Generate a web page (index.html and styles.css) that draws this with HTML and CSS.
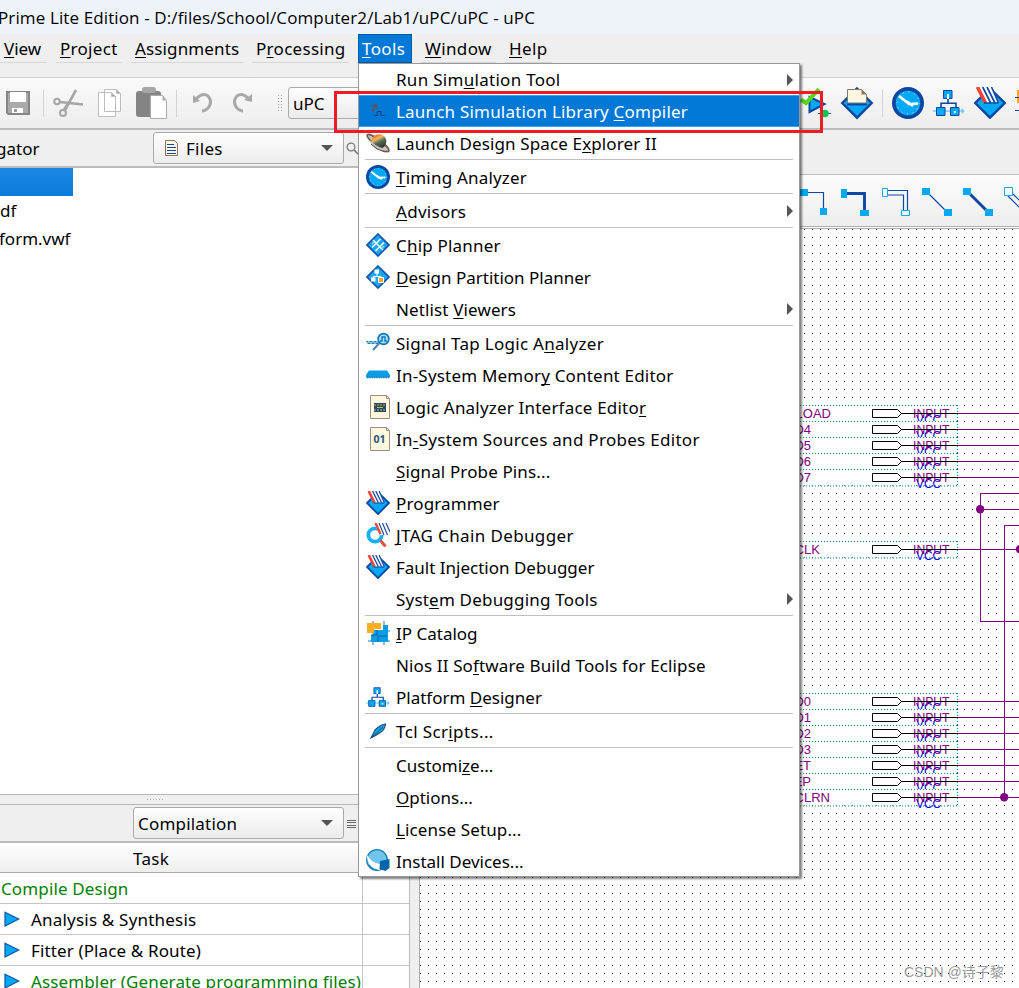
FILE: index.html
```html
<!DOCTYPE html>
<html lang="en">
<head>
<meta charset="utf-8">
<title>uPC</title>
<link rel="stylesheet" href="styles.css">
</head>
<body>
<svg class="defs" width="0" height="0" aria-hidden="true">
  <defs>
    <symbol id="clock" viewBox="0 0 32 32"><circle cx="16" cy="16" r="16" fill="#0d47a1"/><circle cx="16" cy="16" r="12.3" fill="#03a9f4"/><circle cx="16" cy="16" r="11" fill="none" stroke="#d8f2ff" stroke-width="1" stroke-dasharray="1 4.76"/><path d="M7 9l10 8 9-.5M14 14l7 5" fill="none" stroke="#fff" stroke-width="2.6"/></symbol>
    <symbol id="programmer" viewBox="0 0 32 32"><path d="M16 1.5L30.7 16 16 30.7 1.3 16z" fill="#03a9f4" stroke="#0d47a1" stroke-width="2.4"/><path d="M2 0h16l7 16H11z" fill="#fff"/><path d="M3.500 0L11.500 16" stroke="#f44336" stroke-width="3.600"/><path d="M8.700 0l8 16M13 0l8 16" stroke="#0d47a1" stroke-width="1.700"/><path d="M17.500 0l7 16M10 16h14" fill="none" stroke="#0d47a1" stroke-width="1.600"/></symbol>
    <symbol id="tree" viewBox="0 0 32 32"><path d="M0 24h30" stroke="#75cdf5" stroke-width="1.500"/><path d="M28.500 21l3.500 3-3.500 3z" fill="#75cdf5"/><path d="M15 12v5M8 21v-4.700h15V21" fill="none" stroke="#0d47a1" stroke-width="1.600"/><g fill="#03a9f4" stroke="#0d47a1"><path d="M10.500 3.500h8.500v8h-8.500zM3.500 20.500H12v8H3.500zM17.500 20.500H26v8h-8.500z"/></g><path d="M14 7h2v5h-2zM21 24h2v2h-2z" fill="#fff"/></symbol>
    <symbol id="tri" viewBox="0 0 16 16"><path d="M1 1.200L14.700 8 1 15z" fill="#03a9f4" stroke="#1254a8" stroke-width="1.200"/></symbol>
    <pattern id="dots" x="4" y="5" width="8" height="8" patternUnits="userSpaceOnUse"><path d="M0 0h1v1H0z" fill="#000"/></pattern>
    <symbol id="pin" viewBox="0 0 160 24" overflow="visible">
      <path d="M0 0h157.500v16.500H0z" fill="#fff"/>
      <path d="M0 .5h157.500M157.500 0v17M0 17h157" fill="none" stroke="#008080" stroke-dasharray="1 2"/>
      <path d="M72.500 4.500h25l4 4-4 4h-25zM101.500 8.500H158" fill="none" stroke="#000"/>
      <text class="sch blue" x="116" y="19" textLength="25" lengthAdjust="spacingAndGlyphs">VCC</text>
      <text class="sch" x="113" y="13" textLength="36.500" lengthAdjust="spacingAndGlyphs">INPUT</text>
      <path d="M158 8.500h62" stroke="#800080"/><path d="M101.500 8.500H150" stroke="#000"/>
    </symbol>
  </defs>
</svg>
<div class="window">
  <header class="title"><span>Prime Lite Edition - D:/files/School/Computer2/Lab1/uPC/uPC - uPC</span></header>
  <nav class="menubar">
    <span class="mb w-view"><u>V</u>iew</span><span class="mb w-project t3"><u>P</u>roject</span><span class="mb w-assign t1"><u>A</u>ssignments</span><span class="mb w-proc t3">P<u>r</u>ocessing</span><span class="mb w-tools t4 active"><u>T</u>ools</span><span class="mb w-window t4"><u>W</u>indow</span><span class="mb w-help t4"><u>H</u>elp</span>
  </nav>
  <div class="toolbar">
    <svg width="286" height="50" viewBox="0 78 286 50">
      <path d="M6 91h24v24H8l-2-2z" fill="#858585"/><path d="M8 93h20v20H8z" fill="#aaa"/><path d="M10 92h16v10H10zM12 108h11v5H12z" fill="#fff"/><path d="M14 109h3v3h-3z" fill="#999"/>
      <path d="M43.500 90v27M176.500 90v27" stroke="#d2d2d2"/>
      <g fill="none" stroke="#a6a6a6" stroke-width="2"><circle cx="57" cy="101.500" r="2.800"/><circle cx="63" cy="113" r="3"/><path d="M60 102l23 2.500M65 110l11-20M64 110l5-8" stroke-width="2.600"/></g>
      <g fill="#fff" stroke="#bdbdbd"><path d="M104.500 89.500h12l4 4v18h-16zM98.500 92.500h13l4 4v20h-17z"/><path d="M111.500 92.500v4h4zM116.500 89.500v4h4z" fill="#aaa"/></g>
      <rect x="136" y="91" width="25" height="26" rx="3" fill="#848484"/><rect x="142" y="87" width="14" height="6" rx="2.500" fill="#a7a7a7"/><path d="M150.500 95.500h12l4 5v18h-16z" fill="#fff" stroke="#aaa"/><path d="M162.500 95.500v5h4z" fill="#aaa"/>
      <path d="M196 99q7-7 12-3c5 5 2 14-6 15" fill="none" stroke="#a8a8a8" stroke-width="3"/><path d="M193 95v8l7-2z" fill="#a8a8a8"/>
      <path d="M249 99q-7-7-12-3c-5 5-2 14 6 15" fill="none" stroke="#a8a8a8" stroke-width="3"/><path d="M252 94v8l-8-2z" fill="#a8a8a8"/>
      <path d="M278.500 95v17M281.500 95v17" stroke="#aaa" stroke-dasharray="1 2"/>
    </svg>
    <div class="combo upc">uPC</div>
    <svg class="tools-right" width="220" height="50" viewBox="799 78 220 50">
      <path d="M809.500 97l15 7-15 8z" fill="#03a9f4" stroke="#0d47a1" stroke-width="2"/><path d="M801 99.500l5 3.500 13-14" fill="none" stroke="#5bd51b" stroke-width="4"/><path d="M818 113.500h13" stroke="#0d47a1"/><circle cx="825" cy="113.500" r="3.700" fill="#00c853"/>
      <path d="M857 88.500L871.700 103 857 117.700 842.300 103z" fill="#03a9f4" stroke="#0d47a1" stroke-width="2.400"/><path d="M847.500 89.500h14l5 5V103h-19z" fill="#fff7df" stroke="#8d7567"/><path d="M861.500 89.500v5h5z" fill="#8d7567"/><path d="M847 104.500h20" stroke="#0d47a1" stroke-width="2"/>
      <path d="M882.500 90v27" stroke="#d2d2d2"/>
      <use href="#clock" x="892" y="87" width="32" height="32"/><use href="#tree" x="933" y="87" width="32" height="32"/><use href="#programmer" x="974" y="87" width="32" height="32"/>
      <path d="M1017 90h4v13h-4z" fill="#f9a825"/><path d="M1015 97.500h4M1015 110.500h4" stroke="#0d47a1"/>
    </svg>
  </div>
  <main class="body">
    <aside class="dock">
      <div class="dock-head"><span class="nav">gator</span>
        <div class="combo files"><svg width="13" height="16" viewBox="0 0 13 16"><path d="M.5.5h9l3 3v12H.5z" fill="#fff7e2" stroke="#8d6e63"/><path d="M2 4.500h7M2 7.500h9M2 10.500h9M2 13.500h9" stroke="#0d47a1"/></svg><span class="t3">Files</span><i class="down"></i></div>
        <svg class="search" width="13" height="14" viewBox="0 0 13 14"><circle cx="5" cy="5" r="3.900" fill="none" stroke="#777" stroke-width="1.200"/><path d="M8 8l4 4" stroke="#777" stroke-width="1.700"/></svg>
      </div>
      <div class="tree"><div class="sel"></div><div class="file">df</div><div class="file form">form.vwf</div></div>
      <div class="split"></div>
      <div class="dock-head tasks"><div class="combo comp"><span class="t2">Compilation</span><i class="down"></i></div><i class="burger"></i></div>
      <div class="task-head t3">Task</div>
      <div class="row green first"><span class="t1">Compile Design</span></div>
      <div class="row"><svg width="16" height="16"><use href="#tri"/></svg><span class="t2">Analysis &amp; Synthesis</span></div>
      <div class="row"><svg width="16" height="16"><use href="#tri"/></svg><span class="t1">Fitter (Place &amp; Route)</span></div>
      <div class="row green"><svg width="16" height="16"><use href="#tri"/></svg><span class="t1">Assembler (Generate programming files)</span></div>
    </aside>
    <div class="vsplit"></div>
    <section class="editor">
      <div class="gap"></div>
      <div class="wirebar">
        <svg width="220" height="50" viewBox="799 176 220 50">
          <path d="M808 192.500h15.500V208M929 194l16 16" fill="none" stroke="#0d47a1" stroke-width="1.200"/>
          <path d="M847 193.500h17.500V210M970 194l16 16" fill="none" stroke="#0d47a1" stroke-width="2.900"/>
          <path d="M888 190.500h19.500V210M888 195h15.500v15M1012 193l10 10M1008 196l14 14" fill="none" stroke="#0d47a1" stroke-width="1.200"/>
          <path d="M800 189h8v7h-8zM820 208h7v7h-7zM841 189h6v9h-6zM860 210h9v6h-9zM922 188h8v7h-8zM944 209h8v7h-8zM963 188h8v7h-8zM985 209h8v7h-8z" fill="#03a9f4"/>
          <path d="M882.500 188.500h5v8h-5zM901.500 210.500h8v5h-8zM1004.500 187.500h8v8h-8z" fill="#fff" stroke="#03a9f4"/>
        </svg>
      </div>
      <svg class="sheet" width="599" height="759" viewBox="420 229 599 759">
        <path d="M420 229h599v759H420z" fill="url(#dots)"/>
        <use href="#pin" x="800" y="405" width="160" height="24"/><use href="#pin" x="800" y="421" width="160" height="24"/><use href="#pin" x="800" y="437" width="160" height="24"/><use href="#pin" x="800" y="453" width="160" height="24"/><use href="#pin" x="800" y="469" width="160" height="24"/>
        <use href="#pin" x="800" y="541" width="160" height="24"/>
        <use href="#pin" x="800" y="693" width="160" height="24"/><use href="#pin" x="800" y="709" width="160" height="24"/><use href="#pin" x="800" y="725" width="160" height="24"/><use href="#pin" x="800" y="741" width="160" height="24"/><use href="#pin" x="800" y="757" width="160" height="24"/><use href="#pin" x="800" y="773" width="160" height="24"/><use href="#pin" x="800" y="789" width="160" height="24"/>
        <g class="sch names"><text x="831" y="418">LOAD</text><text x="811" y="434">D4</text><text x="811" y="450">D5</text><text x="811" y="466">D6</text><text x="811" y="482">D7</text><text x="820" y="554">CLK</text><text x="811" y="706">D0</text><text x="811" y="722">D1</text><text x="811" y="738">D2</text><text x="811" y="754">D3</text><text x="811" y="770">ET</text><text x="811" y="786">EP</text><text x="830" y="802">CLRN</text></g>
        <path d="M1020 493.500h-39.500v128h39.500M980 509.500h40M1020 525.500h-15.500V797" fill="none" stroke="#800080"/>
        <g fill="#800080"><circle cx="980.200" cy="509.200" r="4.200"/><circle cx="1004.200" cy="797.200" r="4.200"/><circle cx="1020" cy="549.200" r="4.200"/></g>
      </svg>
    </section>
  </main>

  <div class="menu">
    <div class="mi top"><b></b><span class="t3">Run Sim<u>u</u>lation Tool</span><i class="sub"></i></div>
    <div class="mi hot"><b><svg width="24" height="24" viewBox="0 0 24 24"><path d="M6 13l3-6M5 7.500l4-2 3 4" fill="none" stroke="#4d5a69" stroke-width="1.800"/><path d="M8 16.500h3v-4h4v4h4M12 16.500h-4" fill="none" stroke="#1b3f78"/></svg></b><span class="t2">Launch Simulation Library <u>C</u>ompiler</span></div>
    <div class="mi"><b><svg width="26" height="24" viewBox="0 0 26 24"><defs><linearGradient id="planet" x2=".5" y2="1"><stop stop-color="#bd4517"/><stop offset=".4" stop-color="#ffb35c"/><stop offset=".62" stop-color="#527458"/><stop offset="1" stop-color="#333"/></linearGradient></defs><ellipse cx="12" cy="12" rx="13.500" ry="3.200" transform="rotate(37 12 12)" fill="#c9c2be" stroke="#705a50" stroke-width="1.600"/><circle cx="13" cy="10.500" r="7.300" fill="url(#planet)"/><path d="M4 10q5 7 16 9" fill="none" stroke="#c9c2be" stroke-width="2"/><path d="M5 13q5 6 14 8" fill="none" stroke="#5b4a42"/></svg></b><span class="t1">Launch Design Space E<u>x</u>plorer II</span></div>
    <hr>
    <div class="mi"><b><svg width="24" height="24"><use href="#clock"/></svg></b><span class="t2"><u>T</u>iming Analyzer</span></div>
    <hr>
    <div class="mi"><b></b><span class="t3"><u>A</u>dvisors</span><i class="sub"></i></div>
    <hr>
    <div class="mi"><b><svg width="24" height="24" viewBox="0 0 24 24"><path d="M12 1l11 11-11 11L1 12z" fill="#1ba7f0" stroke="#1455aa" stroke-width="1.700"/><path d="M7 7l10 10M6 14.500L14.500 6M9.500 18L18 9.500" stroke="#e8f7ff" stroke-width="1.700"/><path d="M6 11l2-2M16 15l2-2" stroke="#8fd6fa" stroke-width="1.500"/></svg></b><span class="t2">C<u>h</u>ip Planner</span></div>
    <div class="mi"><b><svg width="24" height="24" viewBox="0 0 24 24"><path d="M12 1l11 11-11 11L1 12z" fill="#1ba7f0" stroke="#1455aa" stroke-width="1.700"/><path d="M11 8v3.500M7.500 13v-1.500h7.500V13" fill="none" stroke="#fff"/><path d="M8.500 4.500h4.500v4h-4.500zM5 12.500h4.500v4H5z" fill="#fff"/><path d="M12.500 12.500h5v5h-5z" fill="#ffa726" stroke="#fff"/></svg></b><span><u>D</u>esign Partition Planner</span></div>
    <div class="mi"><b></b><span class="t1">Netlist <u>V</u>iewers</span><i class="sub"></i></div>
    <hr>
    <div class="mi"><b><svg width="24" height="24" viewBox="0 0 24 24"><path d="M0 10.500h2v2h2v-2h2v2h2v-2h2v2h2v-2h2" fill="none" stroke="#1785bd" stroke-width="1.100"/><circle cx="17.500" cy="8" r="5.400" fill="#a8dcf4" stroke="#0878b4" stroke-width="1.600"/><path d="M14 10h2V6h3v4h2" fill="none" stroke="#0878b4" stroke-width="1.300"/><path d="M13.500 12L7 19" stroke="#3f87b6" stroke-width="2"/></svg></b><span class="t3">Signal Tap Logic A<u>n</u>alyzer</span></div>
    <div class="mi"><b><svg width="24" height="24" viewBox="0 0 24 24"><path d="M3 7.500h18l3 4.500v2.500H0V12z" fill="#0c9ce5"/><path d="M1 14.500h22" stroke="#0877bd" stroke-width="1.500" stroke-dasharray="1.500 .8"/></svg></b><span class="t2">In-System Memor<u>y</u> Content Editor</span></div>
    <div class="mi"><b><svg width="24" height="24" viewBox="0 0 24 24"><path d="M4.500.5h16l3 3v20h-19z" fill="#fff8df" stroke="#a08d80"/><path d="M20.500.5v3h3" fill="none" stroke="#a08d80"/><path d="M8 8h12v9H8z" fill="#224c67"/><path d="M8 10h12M8 15h12" stroke="#d6b146" stroke-dasharray="2 1"/><path d="M11 12h6v1h-6z" fill="#d6b146"/></svg></b><span class="t2">Logic Analyzer Interface Edito<u>r</u></span></div>
    <div class="mi"><b><svg width="24" height="24" viewBox="0 0 24 24"><path d="M4.500.5h16l3 3v20h-19z" fill="#fff8df" stroke="#a08d80"/><path d="M20.500.5v3h3" fill="none" stroke="#a08d80"/><text class="zero" x="7.500" y="16">01</text></svg></b><span class="t3">In<u>-</u>System Sources and Probes Editor</span></div>
    <div class="mi"><b></b><span class="t1"><u>S</u>ignal Probe Pins...</span></div>
    <div class="mi"><b><svg width="24" height="24"><use href="#programmer"/></svg></b><span class="t1"><u>P</u>rogrammer</span></div>
    <div class="mi"><b><svg width="24" height="24" viewBox="0 0 24 24"><circle cx="9" cy="12" r="6.700" fill="#fff" stroke="#16b1f2" stroke-width="3.800"/><path d="M8 0h13l3 12H14z" fill="#fff"/><path d="M13 0l5 12M16.500 0l5 12M20 0l4 9" stroke="#234c9b" stroke-width="1.200"/><path d="M9.500 0l5 11" stroke="#f44336" stroke-width="2.300"/><path d="M14.500 17.500l5 6" stroke="#df523d" stroke-width="3"/></svg></b><span class="t4"><u>J</u>TAG Chain Debugger</span></div>
    <div class="mi"><b><svg width="24" height="24"><use href="#programmer"/></svg></b><span>Fault Injection Debugger</span></div>
    <div class="mi"><b></b><span class="t2">Syst<u>e</u>m Debugging Tools</span><i class="sub"></i></div>
    <hr>
    <div class="mi"><b><svg width="24" height="24" viewBox="0 0 24 24"><path d="M7 0v24M18 0v24M2 10h22M2 20h22" stroke="#33729a"/><path d="M7 9h10V4h5v17H5v-7h2z" fill="#0a9de5"/><path d="M1 2h14v6H8v4H1z" fill="#ffad1f"/><path d="M5 14h6V9M12 21v-6h9" fill="none" stroke="#08639e"/></svg></b><span><u>I</u>P Catalog</span></div>
    <div class="mi"><b></b><span class="t1">Nios II So<u>f</u>tware Build Tools for Eclipse</span></div>
    <div class="mi"><b><svg width="24" height="24"><use href="#tree"/></svg></b><span>Platform <u>D</u>esigner</span></div>
    <hr>
    <div class="mi"><b><svg width="24" height="24" viewBox="0 0 24 24"><path d="M5 19l4-8q5-5 10.500-6-.5 6-6 9l-3 2z" fill="#12a5e8" stroke="#174a72" stroke-width="1.100"/><path d="M5 19L17 8" stroke="#174a72"/></svg></b><span class="t4">Tcl Scr<u>i</u>pts...</span></div>
    <hr>
    <div class="mi"><b></b><span>Customi<u>z</u>e...</span></div>
    <div class="mi"><b></b><span><u>O</u>ptions...</span></div>
    <div class="mi"><b></b><span class="t1"><u>L</u>icense Setup...</span></div>
    <div class="mi"><b><svg width="24" height="24" viewBox="0 0 24 24"><circle cx="11" cy="11" r="10.300" fill="#73c4ed" stroke="#1b80ba" stroke-width="1.300"/><path d="M1 6c4 6 7 8 13 9v6C6 20 1 15 1 6z" fill="#fff"/><path d="M3 16q3 5 9 5.300" fill="none" stroke="#1b80ba" stroke-width="1.200"/><path d="M14 12l9.500-2v9l-4 3-6-2z" fill="#0067a8"/></svg></b><span>Install Devices...</span></div>
  </div>
  <div class="marker"></div>
  <div class="watermark">CSDN @诗子黎</div>
</div>
</body>
</html>
```
FILE: styles.css
```css
* { box-sizing: border-box; }
body { margin: 0; background: #fff; font-family: "Noto Sans", sans-serif; font-size: 17px; color: #000; }
svg { display: block; flex: none; }
.defs { position: absolute; }
.window { position: relative; width: 1019px; height: 988px; overflow: hidden; display: flex; flex-direction: column; white-space: nowrap; }
.title { height: 34px; flex: none; background: #eef3fa; line-height: 35px; font-family: "Open Sans", sans-serif; font-size: 17px; }
.title span { display: block; margin-left: -2px; letter-spacing: .12px; }
.t1 { letter-spacing: .13px; }
.t2 { letter-spacing: .2px; }
.t3 { letter-spacing: .29px; }
.t4 { letter-spacing: .37px; }
.menubar { height: 43px; flex: none; background: #efefef; display: flex; gap: 9px; }
.mb { height: 29px; padding-left: 4px; line-height: 29px; border-bottom: 1px solid #d6d6d6; }
u { text-decoration-thickness: 1px; text-underline-offset: 2px; text-decoration-skip-ink: none; }
.w-view { width: 47px; }
.w-project { width: 66px; }
.w-assign { width: 112px; }
.w-proc { width: 97px; }
.w-tools { width: 54px; }
.w-window { width: 75px; }
.w-help { width: 47px; }
.mb.active { background: #0078d7; color: #fff; border: 1px solid #005a9e; padding-left: 3px; line-height: 27px; }
.toolbar { height: 53px; flex: none; border-top: 1px solid #d0d0d0; border-bottom: 2px solid #bbb; background: linear-gradient(#fafafa, #ededed); display: flex; }
.combo { border: 1px solid #aaa; border-radius: 3px; background: linear-gradient(#fefefe, #ececec); display: flex; align-items: center; flex: none; }
.upc { width: 150px; height: 32px; margin: 9px 0 0 2px; padding-left: 4px; }
.tools-right { margin-left: auto; }
.body { flex: 1; min-height: 0; display: flex; }
.dock { width: 410px; flex: none; display: flex; flex-direction: column; background: #fff; overflow: hidden; border-right: 1px solid #b8b8b8; }
.dock-head { height: 38px; flex: none; display: flex; background: #efefef; border-bottom: 2px solid #bbb; }
.nav { width: 157px; margin-left: -4px; line-height: 37px; }
.files { width: 191px; height: 32px; margin-top: 2px; padding-left: 11px; }
.files span { margin-left: 8px; }
.down { margin-left: auto; margin-right: 10px; border: 6px solid transparent; border-top-color: #555; border-bottom: 0; }
.search { margin: 12px 0 0 2px; }
.tree { height: 626px; flex: none; }
.sel { width: 73px; height: 28px; background: linear-gradient(#1a88e2, #0c7bdb); }
.file { height: 28px; line-height: 29px; }
.form { margin-left: -1px; }
.split { height: 11px; flex: none; border-top: 1px solid #b8b8b8; border-bottom: 1px solid #b8b8b8; background: repeating-linear-gradient(90deg, #aaa 0 1px, transparent 1px 3px) 147px 4px / 17px 1px no-repeat #efefef; }
.tasks .comp { width: 211px; height: 32px; margin: 2px 0 0 133px; padding-left: 4px; }
.burger { width: 9px; height: 8px; margin: 15px 0 0 3px; background: repeating-linear-gradient(#666 0 1.2px, #efefef 1.2px 2.3px); }
.task-head { height: 30px; flex: none; border-bottom: 1px solid #aaa; background: linear-gradient(#fff, #eee); padding-left: 133px; line-height: 31px; }
.row { height: 31px; flex: none; display: flex; align-items: center; padding-left: 4px; border-bottom: 1px solid #c4c4c4; background: linear-gradient(#c4c4c4, #c4c4c4) 362px 0 / 1px 100% no-repeat; }
.row span { margin-left: 11px; }
.row.first { padding-left: 1px; }
.row.first span { margin-left: 0; }
.green { color: #008000; }
.vsplit { width: 10px; flex: none; background: #efefef; border-right: 1px solid #aaa; }
.editor { flex: 1; min-width: 0; display: flex; flex-direction: column; }
.gap { height: 44px; flex: none; background: #efefef; }
.wirebar { height: 55px; flex: none; border-top: 1px solid #bbb; border-bottom: 3px double #b0b0b0; background: linear-gradient(#fcfcfc, #eee); display: flex; justify-content: flex-end; padding-top: 1px; }
.sheet { background: #fff; }
.sch { font: 13px "Liberation Sans", Arial, sans-serif; fill: #800080; }
.sch.blue { fill: #0000e0; }
.names { text-anchor: end; }
.menu { position: absolute; left: 358px; top: 63px; width: 442px; height: 814px; background: #fff; border: 1px solid #999; box-shadow: 2px 2px 2px rgba(0,0,0,.5); }
.mi { height: 32px; display: flex; align-items: center; }
.mi.top { height: 31px; }
.mi b { width: 37px; padding-left: 7px; flex: none; }
.mi.hot { background: #0078d7; color: #fff; border: 1px solid #3aa0f5; border-width: 1px 0; }
.sub { margin-left: auto; margin-right: 6px; border: 6px solid transparent; border-left-color: #555; border-right: 0; }
hr { height: 1px; margin: 0 6px 1px; border: 0; background: #c0c0c0; }
.marker { position: absolute; left: 334px; top: 91px; width: 489px; height: 42px; border: 3px solid #ed1c24; }
.watermark { position: absolute; left: 904px; top: 962px; font: 14px/20px "Liberation Sans", "Noto Sans CJK SC", sans-serif; color: #999; }
.zero { font: bold 10.5px "Noto Sans", sans-serif; fill: #22557a; }
```
